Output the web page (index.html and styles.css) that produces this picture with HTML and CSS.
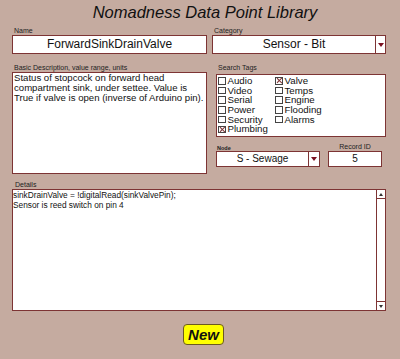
FILE: index.html
```html
<!DOCTYPE html>
<html>
<head>
<meta charset="utf-8">
<link rel="stylesheet" href="styles.css">
</head>
<body>
<h1 class="title">Nomadness Data Point Library</h1>
<div class="form">
  <div class="field">
    <div class="label">Name</div>
    <div class="box name-box">ForwardSinkDrainValve</div>
  </div>
  <div class="field">
    <div class="label">Category</div>
    <div class="box select cat-select">
      <span class="sel-val">Sensor - Bit</span>
      <span class="sel-btn"><span class="tri"></span></span>
    </div>
  </div>
  <div class="field desc-field">
    <div class="label">Basic Description, value range, units</div>
    <div class="box desc-box">Status of stopcock on forward head<br>compartment sink, under settee. Value is<br>True if valve is open (inverse of Arduino pin).</div>
  </div>
  <div class="right-col">
    <div class="label tags-label">Search Tags</div>
    <div class="box tags-box">
      <div class="tag-col">
        <div class="tag"><span class="cb"></span>Audio</div>
        <div class="tag"><span class="cb"></span>Video</div>
        <div class="tag"><span class="cb"></span>Serial</div>
        <div class="tag"><span class="cb"></span>Power</div>
        <div class="tag"><span class="cb"></span>Security</div>
        <div class="tag"><span class="cb checked"></span>Plumbing</div>
      </div>
      <div class="tag-col">
        <div class="tag"><span class="cb checked"></span>Valve</div>
        <div class="tag"><span class="cb"></span>Temps</div>
        <div class="tag"><span class="cb"></span>Engine</div>
        <div class="tag"><span class="cb"></span>Flooding</div>
        <div class="tag"><span class="cb"></span>Alarms</div>
      </div>
    </div>
    <div class="node-row">
      <div class="node-field">
        <div class="label node-label">Node</div>
        <div class="box select node-select">
          <span class="sel-val">S - Sewage</span>
          <span class="sel-btn"><span class="tri"></span></span>
        </div>
      </div>
      <div class="rec-field">
        <div class="label rec-label">Record ID</div>
        <div class="box rec-box">5</div>
      </div>
    </div>
  </div>
  <div class="field details-field">
    <div class="label details-label">Details</div>
    <div class="box details-box">
      <div class="details-text">sinkDrainValve = !digitalRead(sinkValvePin);<br>Sensor is reed switch on pin 4</div>
      <div class="scrollbar">
        <span class="sb-btn"><span class="tri up"></span></span>
        <span class="sb-track"></span>
        <span class="sb-btn"><span class="tri"></span></span>
      </div>
    </div>
  </div>
</div>
<div class="actions">
  <button class="new-btn">New</button>
</div>
</body>
</html>
```

FILE: styles.css
```css
html, body {
  margin: 0;
  padding: 0;
}
body {
  background: #c5aba0;
  font-family: "Liberation Sans", Arial, sans-serif;
  color: #111;
  width: 400px;
  height: 359px;
  overflow: hidden;
}
.title {
  margin: 0;
  height: 27px;
  line-height: 25px;
  font-size: 16.5px;
  font-style: italic;
  font-weight: normal;
  text-align: center;
  padding-left: 10px;
  color: #111;
}
.form {
  display: grid;
  grid-template-columns: 195px 174px;
  column-gap: 5px;
  padding-left: 12px;
}
.label {
  font-size: 7px;
  line-height: 8px;
  height: 8px;
  padding-left: 2px;
  color: #222;
}
.box {
  box-sizing: border-box;
  background: #fff;
  border: 1px solid #7d3434;
}
.name-box {
  height: 19px;
  font-size: 12px;
  line-height: 17px;
  text-align: center;
}
.select {
  display: flex;
  height: 19px;
}
.sel-val {
  flex: 1;
  text-align: center;
  font-size: 12px;
  line-height: 17px;
}
.sel-btn {
  width: 9px;
  border-left: 1px solid #7d3434;
  display: flex;
  align-items: center;
  justify-content: center;
}
.tri {
  width: 0;
  height: 0;
  border-left: 3px solid transparent;
  border-right: 3px solid transparent;
  border-top: 4px solid #7a1020;
}
.desc-field {
  margin-top: 10px;
}
.desc-box {
  height: 102px;
  font-size: 9.6px;
  line-height: 10px;
  padding: 0 0 0 1px;
  white-space: nowrap;
  overflow: hidden;
}
.right-col {
  margin-top: 10px;
  padding-left: 4px;
  display: flex;
  flex-direction: column;
}
.tags-box {
  height: 63px;
  margin-top: 2px;
  display: flex;
  padding: 1px 0 0 1px;
}
.tag-col {
  width: 57px;
}
.tag {
  display: flex;
  align-items: center;
  height: 9.7px;
  font-size: 9.7px;
  line-height: 9.7px;
}
.cb {
  box-sizing: border-box;
  width: 7.5px;
  height: 7.5px;
  border: 1px solid #444;
  background: #fff;
  margin-right: 2px;
  position: relative;
}
.cb.checked::before,
.cb.checked::after {
  content: "";
  position: absolute;
  left: -0.5px;
  top: 2.3px;
  width: 6.5px;
  height: 1px;
  background: #7d3434;
  transform: rotate(45deg);
}
.cb.checked::after {
  transform: rotate(-45deg);
}
.node-row {
  display: flex;
  margin-top: 6px;
  gap: 8px;
}
.node-field {
  width: 104px;
}
.node-label {
  font-size: 5.5px;
  font-weight: bold;
  line-height: 6px;
  height: 6px;
  margin-top: 2px;
  padding-left: 1px;
}
.node-select {
  height: 16px;
}
.node-select .sel-val {
  font-size: 10px;
  line-height: 14px;
}
.node-select .sel-btn {
  width: 10px;
}
.rec-field {
  width: 54px;
}
.rec-label {
  text-align: center;
  font-size: 7px;
  padding-left: 0;
}
.rec-box {
  height: 16px;
  font-size: 10px;
  line-height: 14px;
  text-align: center;
}
.details-field {
  grid-column: 1 / 3;
  margin-top: 7px;
  width: 374px;
}
.details-label {
  padding-left: 3px;
  height: 8px;
}
.details-box {
  height: 122px;
  display: flex;
}
.details-text {
  flex: 1;
  font-size: 8.3px;
  line-height: 10px;
  padding-left: 0;
}
.scrollbar {
  width: 8px;
  border-left: 1px solid #7d3434;
  display: flex;
  flex-direction: column;
}
.sb-btn {
  height: 8px;
  border-bottom: 1px solid #7d3434;
  display: flex;
  align-items: center;
  justify-content: center;
}
.sb-btn:last-child {
  border-bottom: none;
  border-top: 1px solid #7d3434;
}
.sb-btn .tri {
  border-left-width: 2px;
  border-right-width: 2px;
  border-top: 3px solid #333;
}
.sb-btn .tri.up {
  border-top: none;
  border-bottom: 3px solid #333;
}
.sb-track {
  flex: 1;
}
.actions {
  display: flex;
  justify-content: center;
  margin-top: 13px;
  padding-left: 7px;
}
.new-btn {
  font-family: "Liberation Sans", Arial, sans-serif;
  font-size: 15px;
  font-weight: bold;
  font-style: italic;
  background: #ffff00;
  border: 1px solid #6b5a20;
  border-radius: 4px;
  width: 41px;
  height: 21px;
  padding: 0;
  line-height: 19px;
  color: #111;
}
```
